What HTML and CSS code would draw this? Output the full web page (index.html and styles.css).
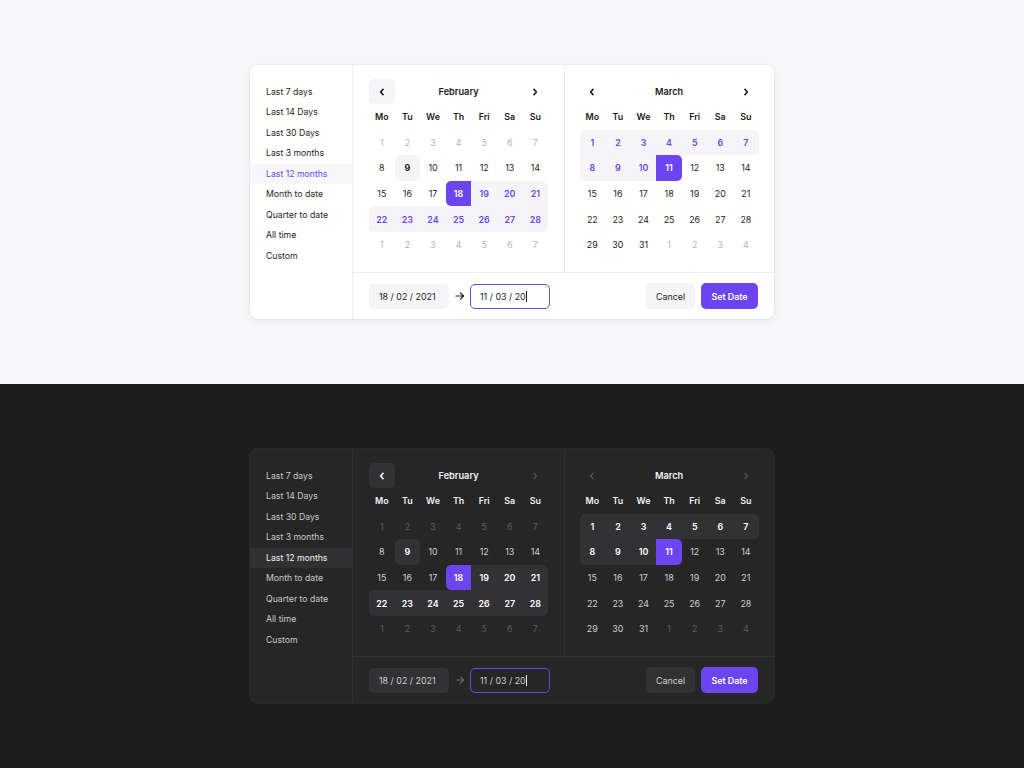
FILE: index.html
```html
<!DOCTYPE html>
<html lang="en">
<head>
<meta charset="utf-8">
<title>Date range picker</title>
<link rel="stylesheet" href="styles.css">
</head>
<body>
<section class="stage light">
  <div class="card">
    <ul class="side">
      <li>Last 7 days</li><li>Last 14 Days</li><li>Last 30 Days</li><li>Last 3 months</li>
      <li class="sel">Last 12 months</li><li>Month to date</li><li>Quarter to date</li><li>All time</li><li>Custom</li>
    </ul>
    <div class="main">
      <div class="months">
        <div class="cal">
          <div class="head">
            <span class="nav btn"><svg viewBox="0 0 8 8" width="8" height="8"><path d="M5 1.4 L2.6 4 L5 6.6"/></svg></span>
            <span class="title">February</span>
            <span class="nav"><svg viewBox="0 0 8 8" width="8" height="8"><path d="M3 1.4 L5.4 4 L3 6.6"/></svg></span>
          </div>
          <div class="grid">
            <span class="wd">Mo</span><span class="wd">Tu</span><span class="wd">We</span><span class="wd">Th</span><span class="wd">Fri</span><span class="wd">Sa</span><span class="wd">Su</span>
            <span class="m">1</span><span class="m">2</span><span class="m">3</span><span class="m">4</span><span class="m">5</span><span class="m">6</span><span class="m">7</span>
            <span>8</span><span class="t">9</span><span>10</span><span>11</span><span>12</span><span>13</span><span>14</span>
            <span>15</span><span>16</span><span>17</span><span class="s tl bl">18</span><span class="r">19</span><span class="r">20</span><span class="r tr">21</span>
            <span class="r tl bl">22</span><span class="r">23</span><span class="r">24</span><span class="r">25</span><span class="r">26</span><span class="r">27</span><span class="r br">28</span>
            <span class="m">1</span><span class="m">2</span><span class="m">3</span><span class="m">4</span><span class="m">5</span><span class="m">6</span><span class="m">7</span>
          </div>
        </div>
        <div class="cal">
          <div class="head">
            <span class="nav"><svg viewBox="0 0 8 8" width="8" height="8"><path d="M5 1.4 L2.6 4 L5 6.6"/></svg></span>
            <span class="title">March</span>
            <span class="nav"><svg viewBox="0 0 8 8" width="8" height="8"><path d="M3 1.4 L5.4 4 L3 6.6"/></svg></span>
          </div>
          <div class="grid">
            <span class="wd">Mo</span><span class="wd">Tu</span><span class="wd">We</span><span class="wd">Th</span><span class="wd">Fri</span><span class="wd">Sa</span><span class="wd">Su</span>
            <span class="r tl">1</span><span class="r">2</span><span class="r">3</span><span class="r">4</span><span class="r">5</span><span class="r">6</span><span class="r tr br">7</span>
            <span class="r bl">8</span><span class="r">9</span><span class="r">10</span><span class="s tr br">11</span><span>12</span><span>13</span><span>14</span>
            <span>15</span><span>16</span><span>17</span><span>18</span><span>19</span><span>20</span><span>21</span>
            <span>22</span><span>23</span><span>24</span><span>25</span><span>26</span><span>27</span><span>28</span>
            <span>29</span><span>30</span><span>31</span><span class="m">1</span><span class="m">2</span><span class="m">3</span><span class="m">4</span>
          </div>
        </div>
      </div>
      <div class="foot">
        <span class="inp">18 / 02 / 2021</span>
        <svg class="arrow" viewBox="0 0 10 10" width="10" height="10"><path d="M1 5 H8.6 M5.4 1.8 L8.6 5 L5.4 8.2"/></svg>
        <span class="inp focus">11 / 03 / 20<i class="caret"></i></span>
        <span class="b cancel">Cancel</span>
        <span class="b primary">Set Date</span>
      </div>
    </div>
  </div>
</section>
<section class="stage dark">
  <div class="card">
    <ul class="side">
      <li>Last 7 days</li><li>Last 14 Days</li><li>Last 30 Days</li><li>Last 3 months</li>
      <li class="sel">Last 12 months</li><li>Month to date</li><li>Quarter to date</li><li>All time</li><li>Custom</li>
    </ul>
    <div class="main">
      <div class="months">
        <div class="cal">
          <div class="head">
            <span class="nav btn"><svg viewBox="0 0 8 8" width="8" height="8"><path d="M5 1.4 L2.6 4 L5 6.6"/></svg></span>
            <span class="title">February</span>
            <span class="nav dim"><svg viewBox="0 0 8 8" width="8" height="8"><path d="M3 1.4 L5.4 4 L3 6.6"/></svg></span>
          </div>
          <div class="grid">
            <span class="wd">Mo</span><span class="wd">Tu</span><span class="wd">We</span><span class="wd">Th</span><span class="wd">Fri</span><span class="wd">Sa</span><span class="wd">Su</span>
            <span class="m">1</span><span class="m">2</span><span class="m">3</span><span class="m">4</span><span class="m">5</span><span class="m">6</span><span class="m">7</span>
            <span>8</span><span class="t">9</span><span>10</span><span>11</span><span>12</span><span>13</span><span>14</span>
            <span>15</span><span>16</span><span>17</span><span class="s tl bl">18</span><span class="r">19</span><span class="r">20</span><span class="r tr">21</span>
            <span class="r tl bl">22</span><span class="r">23</span><span class="r">24</span><span class="r">25</span><span class="r">26</span><span class="r">27</span><span class="r br">28</span>
            <span class="m">1</span><span class="m">2</span><span class="m">3</span><span class="m">4</span><span class="m">5</span><span class="m">6</span><span class="m">7</span>
          </div>
        </div>
        <div class="cal">
          <div class="head">
            <span class="nav dim"><svg viewBox="0 0 8 8" width="8" height="8"><path d="M5 1.4 L2.6 4 L5 6.6"/></svg></span>
            <span class="title">March</span>
            <span class="nav dim"><svg viewBox="0 0 8 8" width="8" height="8"><path d="M3 1.4 L5.4 4 L3 6.6"/></svg></span>
          </div>
          <div class="grid">
            <span class="wd">Mo</span><span class="wd">Tu</span><span class="wd">We</span><span class="wd">Th</span><span class="wd">Fri</span><span class="wd">Sa</span><span class="wd">Su</span>
            <span class="r tl">1</span><span class="r">2</span><span class="r">3</span><span class="r">4</span><span class="r">5</span><span class="r">6</span><span class="r tr br">7</span>
            <span class="r bl">8</span><span class="r">9</span><span class="r">10</span><span class="s tr br">11</span><span>12</span><span>13</span><span>14</span>
            <span>15</span><span>16</span><span>17</span><span>18</span><span>19</span><span>20</span><span>21</span>
            <span>22</span><span>23</span><span>24</span><span>25</span><span>26</span><span>27</span><span>28</span>
            <span>29</span><span>30</span><span>31</span><span class="m">1</span><span class="m">2</span><span class="m">3</span><span class="m">4</span>
          </div>
        </div>
      </div>
      <div class="foot">
        <span class="inp">18 / 02 / 2021</span>
        <svg class="arrow" viewBox="0 0 10 10" width="10" height="10"><path d="M1 5 H8.6 M5.4 1.8 L8.6 5 L5.4 8.2"/></svg>
        <span class="inp focus">11 / 03 / 20<i class="caret"></i></span>
        <span class="b cancel">Cancel</span>
        <span class="b primary">Set Date</span>
      </div>
    </div>
  </div>
</section>
</body>
</html>
```

FILE: styles.css
```css
* { box-sizing: border-box; margin: 0; padding: 0; }
html, body { width: 1024px; height: 768px; overflow: hidden; }
body { font-family: Inter, "Noto Sans", "Liberation Sans", sans-serif; }

.stage {
  height: 384px;
  display: flex;
  align-items: center;
  justify-content: center;
  background: var(--page);
}

.light {
  --page: #f8f8fa;
  --card: #ffffff;
  --line: #eeeef1;
  --text: #1a1a1d;
  --num: #1d1d20;
  --muted: #b3b3b8;
  --soft: #f5f5f8;
  --accent: #6c45f0;
  --range-text: #6c45f0;
  --side-text: #1d1d20;
  --side-sel: #6c45f0;
  --side-sel-bg: #f7f7f9;
  --dim: #1d1d20;
  --arrow: #1d1d20;
  --shadow: 0 2px 10px rgba(20, 20, 40, 0.07), 0 0 0 1px rgba(20, 20, 40, 0.03);
}

.dark {
  --page: #1c1c1c;
  --card: #262627;
  --line: #303031;
  --text: #f2f2f2;
  --num: #cfcfd0;
  --muted: #5b5b5d;
  --soft: #323234;
  --accent: #6c45f0;
  --range-text: #ffffff;
  --side-text: #c9c9ca;
  --side-sel: #f2f2f2;
  --side-sel-bg: #313133;
  --dim: #616163;
  --arrow: #68686a;
  --shadow: 0 0 0 1px #2a2a2b;
}

.card {
  width: 524px;
  height: 254px;
  background: var(--card);
  border-radius: 8px;
  box-shadow: var(--shadow);
  display: flex;
  overflow: hidden;
}

.side {
  width: 103px;
  flex: none;
  list-style: none;
  padding-top: 16.5px;
  border-right: 1px solid var(--line);
}
.side li {
  height: 20.5px;
  line-height: 20.5px;
  padding-left: 16px;
  font-size: 8.7px;
  font-weight: 400;
  color: var(--side-text);
  white-space: nowrap;
}
.side li.sel { color: var(--side-sel); background: var(--side-sel-bg); }

.main { flex: 1; display: flex; flex-direction: column; min-width: 0; }
.months { flex: 1; display: flex; }
.cal { flex: 1; padding: 14px 0 0 16px; }
.cal + .cal { border-left: 1px solid var(--line); padding-left: 15px; }

.head {
  width: 179.2px;
  height: 25px;
  display: flex;
  align-items: center;
}
.nav {
  width: 25.6px;
  height: 25px;
  display: flex;
  align-items: center;
  justify-content: center;
  border-radius: 5px;
}
.nav.btn { background: var(--soft); }
.nav svg path {
  fill: none;
  stroke: var(--text);
  stroke-width: 1.6;
  stroke-linecap: round;
  stroke-linejoin: round;
}
.nav.dim svg path { stroke: var(--dim); stroke-width: 1.1; }
.title {
  flex: 1;
  text-align: center;
  font-size: 9.2px;
  font-weight: 600;
  color: var(--text);
}

.grid {
  width: 179.2px;
  display: grid;
  grid-template-columns: repeat(7, 25.6px);
  grid-auto-rows: 25.6px;
}
.grid span {
  display: flex;
  align-items: center;
  justify-content: center;
  font-size: 8.9px;
  font-weight: 400;
  color: var(--num);
}
.grid .wd { font-weight: 600; color: var(--text); }
.grid .m { color: var(--muted); font-weight: 400; }
.grid .t { background: var(--soft); border-radius: 5px; font-weight: 700; color: var(--text); }
.grid .r { background: var(--soft); color: var(--range-text); font-weight: 600; }
.grid .s { background: var(--accent); color: #fff; font-weight: 600; }
.grid .tl { border-top-left-radius: 5px; }
.grid .tr { border-top-right-radius: 5px; }
.grid .bl { border-bottom-left-radius: 5px; }
.grid .br { border-bottom-right-radius: 5px; }

.foot {
  height: 47px;
  flex: none;
  border-top: 1px solid var(--line);
  display: flex;
  align-items: center;
  padding: 0 16px;
}
.inp {
  width: 80px;
  height: 25px;
  border-radius: 5px;
  background: var(--soft);
  color: var(--num);
  font-size: 8.9px;
  font-weight: 400;
  display: flex;
  align-items: center;
  padding-left: 10px;
}
.inp.focus { background: transparent; border: 1px solid var(--accent); padding-left: 9px; }
.caret { display: inline-block; width: 1px; height: 11px; background: var(--text); margin-left: 0.5px; }
.arrow { margin: 0 5.5px; flex: none; }
.arrow path {
  fill: none;
  stroke: var(--arrow);
  stroke-width: 1.2;
  stroke-linecap: round;
  stroke-linejoin: round;
}
.b {
  height: 26px;
  border-radius: 5px;
  display: flex;
  align-items: center;
  justify-content: center;
  font-size: 8.9px;
  font-weight: 400;
}
.cancel { margin-left: auto; width: 49px; background: var(--soft); color: var(--num); }
.primary { margin-left: 6px; width: 57px; background: var(--accent); color: #fff; font-weight: 600; }
```
